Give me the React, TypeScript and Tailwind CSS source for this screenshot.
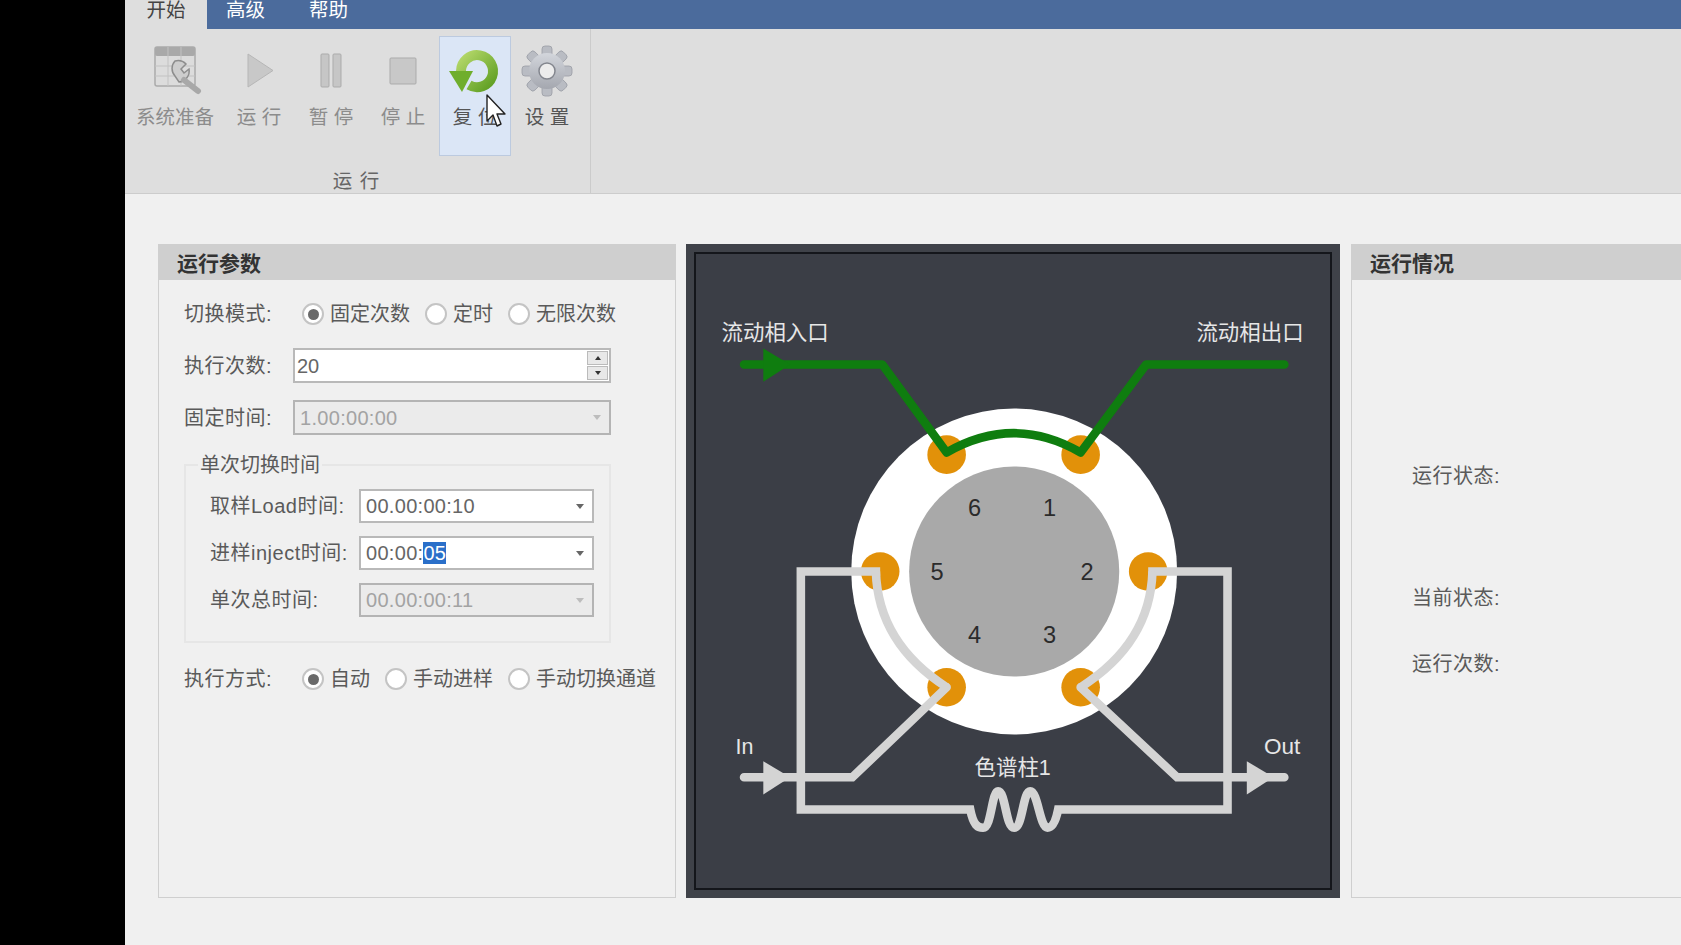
const RIBBON_ICON = "h-[58px] w-[58px]";

function PrepareIcon() {
  return (
    <svg viewBox="0 0 58 58" className={RIBBON_ICON}>
      <rect x="9" y="5" width="40" height="39" rx="2" fill="#dcdcdc" stroke="#ababab" strokeWidth="1.5" />
      <rect x="9" y="5" width="40" height="9" rx="2" fill="#a9a9a9" />
      <path d="M9 24H49M9 34H49M22 5V44M35 5V44" stroke="#c2c2c2" strokeWidth="1" />
      <path d="M29 19a11 11 0 0 1 11 3l-5 5 3 4 5-4a11 11 0 0 1-10 13L29 34a11 11 0 0 1 0-15Z" fill="#cdcdcd" stroke="#8d8d8d" strokeWidth="1.5" />
      <path d="M38 38L52 49" stroke="#a8a8a8" strokeWidth="6" strokeLinecap="round" />
    </svg>
  );
}

function PlayIcon() {
  return (
    <svg viewBox="0 0 58 58" className={RIBBON_ICON}>
      <path d="M18 12L43 28.500L18 45Z" fill="#c8c8c8" stroke="#b6b6b6" />
    </svg>
  );
}

function PauseIcon() {
  return (
    <svg viewBox="0 0 58 58" className={RIBBON_ICON}>
      <rect x="19" y="12" width="8" height="33" rx="1" fill="#c6c6c6" stroke="#ababab" />
      <rect x="31" y="12" width="8" height="33" rx="1" fill="#c6c6c6" stroke="#ababab" />
    </svg>
  );
}

function StopIcon() {
  return (
    <svg viewBox="0 0 58 58" className={RIBBON_ICON}>
      <rect x="16" y="16" width="26" height="26" rx="1" fill="#c8c8c8" stroke="#ababab" />
    </svg>
  );
}

function ResetIcon() {
  return (
    <svg viewBox="0 0 58 58" className={RIBBON_ICON}>
      <defs>
        <linearGradient id="resetGreen" x1="0" y1="0" x2="1" y2="1">
          <stop offset="0" stopColor="#b5d86a" />
          <stop offset="1" stopColor="#5e9e22" />
        </linearGradient>
      </defs>
      <path d="M15 29A16 16 0 1 1 23 43" fill="none" stroke="url(#resetGreen)" strokeWidth="10" />
      <path d="M3 29H27L16 50Z" fill="#6fae2c" />
    </svg>
  );
}

function GearIcon() {
  const teeth = [0, 45, 90, 135, 180, 225, 270, 315];
  return (
    <svg viewBox="0 0 58 58" className={RIBBON_ICON}>
      <defs>
        <linearGradient id="gearGray" x1="0" y1="0" x2="0" y2="1">
          <stop offset="0" stopColor="#d3d6dc" />
          <stop offset="1" stopColor="#a4a7af" />
        </linearGradient>
      </defs>
      {teeth.map((deg) => (
        <rect key={deg} x="24" y="4" width="10" height="12" rx="3" fill="#b9bcc3" stroke="#9a9da5" strokeWidth="0.8" transform={`rotate(${deg} 29 29)`} />
      ))}
      <circle cx="29" cy="29" r="18" fill="url(#gearGray)" />
      <circle cx="29" cy="29" r="8" fill="#ececec" stroke="#83868e" strokeWidth="1.5" />
    </svg>
  );
}

function RibbonButton({ label, wide, disabled, active, children }: { label: string; wide?: boolean; disabled?: boolean; active?: boolean; children: React.ReactNode }) {
  return (
    <div
      className={`flex h-[120px] shrink-0 flex-col items-center border pt-[5px] ${wide ? "w-[96px]" : "w-[72px]"} ${
        active ? "border-[#bccadf] bg-[#dbe6f6]" : "border-transparent"
      }`}
    >
      {children}
      <span className={`mt-[5px] whitespace-nowrap text-[19.5px] leading-[24px] ${disabled ? "text-[#8c8c8c]" : "text-[#555555]"}`}>{label}</span>
    </div>
  );
}

function FieldLabel({ text, className }: { text: string; className: string }) {
  return <span className={`whitespace-nowrap tracking-[0.5px] ${className}`}>{text}</span>;
}

function Radio({ label, checked }: { label: string; checked?: boolean }) {
  return (
    <div className="flex items-center gap-[6px]">
      <span className="flex h-[22px] w-[22px] items-center justify-center rounded-full border-2 border-[#c4c4c4] bg-white">
        {checked && <span className="h-[11px] w-[11px] rounded-full bg-[#6a6a6a]" />}
      </span>
      <span className="whitespace-nowrap">{label}</span>
    </div>
  );
}

function Caret({ disabled }: { disabled?: boolean }) {
  return <span className={`h-0 w-0 border-x-[4px] border-t-[5px] border-x-transparent ${disabled ? "border-t-[#bdbdbd]" : "border-t-[#666666]"}`} />;
}

function ComboBox({ value, disabled, className, children }: { value?: string; disabled?: boolean; className: string; children?: React.ReactNode }) {
  return (
    <div
      className={`flex items-center justify-between border-2 pr-[8px] text-[20px] tracking-[0.3px] ${className} ${
        disabled ? "border-[#b4b4b4] bg-[#ebebeb] text-[#a3a3a3]" : "border-[#b9b9b9] bg-white text-[#666666]"
      }`}
    >
      <span>{children ?? value}</span>
      <Caret disabled={disabled} />
    </div>
  );
}

function PanelHeader({ title }: { title: string }) {
  return <div className="flex h-[36px] shrink-0 items-center bg-[#cfcfcf] pl-[18px] pt-[3px] text-[21px] font-bold text-[#333333]">{title}</div>;
}

function ValveDiagram() {
  const ports = [
    [883, 424],
    [1008, 424],
    [821, 533],
    [1071, 533],
    [883, 641],
    [1008, 641],
  ];
  const numbers = [
    ["6", 909, 473],
    ["1", 979, 473],
    ["5", 874, 533],
    ["2", 1014, 533],
    ["4", 909, 592],
    ["3", 979, 592],
  ] as const;
  return (
    <svg viewBox="649.2 236.9 591.4 591.3" className="block h-full w-full">
      <circle cx="946" cy="533" r="152" fill="#ffffff" />
      <circle cx="946" cy="533" r="98" fill="#a9a9a9" />
      {ports.map(([cx, cy]) => (
        <circle key={`${cx}-${cy}`} cx={cx} cy={cy} r="18" fill="#e29109" />
      ))}
      <g fill="none" stroke="#d4d4d4" strokeWidth="8">
        <path d="M821 533H747V755H905C908 770 912 772 917 772C925 772 925 738 931 738C938 738 938 772 946 772C954 772 954 738 961 738C968 738 970 772 977 772C982 772 985 765 987 755H1145V533H1071" />
        <path d="M817 533Q819 600 883 641" />
        <path d="M1075 533Q1073 600 1008 641" />
        <path d="M694 725H795L883 641" strokeLinecap="round" />
        <path d="M1008 641L1098 725H1198" strokeLinecap="round" />
      </g>
      <path d="M712 710L737 725L712 741Z" fill="#d4d4d4" />
      <path d="M1163 710L1188 725L1163 741Z" fill="#d4d4d4" />
      <g fill="none" stroke="#0f7d0f" strokeWidth="8">
        <path d="M694 340H823L883 422Q946 386 1008 422L1069 340H1198" strokeLinecap="round" strokeLinejoin="round" />
      </g>
      <path d="M712 325L737 340L712 356Z" fill="#0f7d0f" />
      <g fill="#e6e6e6" fontSize="20">
        <text x="673" y="317">流动相入口</text>
        <text x="1116" y="317">流动相出口</text>
        <text x="686" y="703">In</text>
        <text x="1179" y="703" fontSize="21">Out</text>
        <text x="909" y="723">色谱柱1</text>
      </g>
      <g fill="#2b2b2b" fontSize="22" textAnchor="middle">
        {numbers.map(([n, x, y]) => (
          <text key={n} x={x} y={y + 8}>
            {n}
          </text>
        ))}
      </g>
    </svg>
  );
}

export default function App() {
  return (
    <div className="flex h-[945px] w-[1681px] overflow-hidden bg-black font-['Liberation_Sans','Noto_Sans_CJK_SC',sans-serif]">
      <div className="w-[125px] shrink-0 bg-black" />
      <div className="relative flex min-w-0 flex-1 flex-col bg-[#f0f0f0]">
        {/* menu tabs */}
        <div className="flex h-[29px] shrink-0 items-start bg-[#4b6b9c] text-[19.5px] leading-[20px] text-white">
          <div className="flex h-full w-[82px] justify-center bg-[#dedede] text-[#444444]">开始</div>
          <span className="ml-[19px]">高级</span>
          <span className="ml-[44px]">帮助</span>
        </div>

        {/* ribbon */}
        <div className="flex h-[165px] shrink-0 border-b border-[#cccccc] bg-[#dedede]">
          <div className="flex w-[466px] flex-col border-r border-[#cbcbcb] pl-[2px] pt-[7px]">
            <div className="flex">
              <RibbonButton label="系统准备" wide disabled>
                <PrepareIcon />
              </RibbonButton>
              <RibbonButton label="运 行" disabled>
                <PlayIcon />
              </RibbonButton>
              <RibbonButton label="暂 停" disabled>
                <PauseIcon />
              </RibbonButton>
              <RibbonButton label="停 止" disabled>
                <StopIcon />
              </RibbonButton>
              <RibbonButton label="复 位" active>
                <ResetIcon />
              </RibbonButton>
              <RibbonButton label="设 置">
                <GearIcon />
              </RibbonButton>
            </div>
            <div className="mt-[13px] pr-[4px] text-center text-[19.5px] leading-[24px] tracking-[1px] text-[#666666]">运 行</div>
          </div>
        </div>

        {/* content */}
        <div className="flex flex-1 gap-[10px] pl-[33px] pt-[50px]">
          <section className="flex h-[654px] w-[518px] shrink-0 flex-col border border-t-0 border-[#cfcfcf] text-[20px] text-[#5a5a5a]">
            <PanelHeader title="运行参数" />
            <div className="flex flex-col pl-[25px] pt-[17px]">
              <div className="flex h-[34px] items-center">
                <FieldLabel text="切换模式:" className="w-[118px]" />
                <div className="flex gap-[15px]">
                  <Radio label="固定次数" checked />
                  <Radio label="定时" />
                  <Radio label="无限次数" />
                </div>
              </div>
              <div className="mt-[17px] flex h-[35px] items-center">
                <FieldLabel text="执行次数:" className="w-[109px]" />
                <div className="flex h-full w-[318px] items-center justify-between border-2 border-[#b9b9b9] bg-white pl-[2px] pr-[1px] text-[20px] text-[#666666]">
                  <span>20</span>
                  <div className="flex flex-col gap-[1px]">
                    <span className="flex h-[14px] w-[21px] items-center justify-center border border-[#bbbbbb] bg-[#e8e8e8]">
                      <span className="h-0 w-0 border-x-[3px] border-b-[4px] border-x-transparent border-b-[#333333]" />
                    </span>
                    <span className="flex h-[14px] w-[21px] items-center justify-center border border-[#bbbbbb] bg-[#e8e8e8]">
                      <span className="h-0 w-0 border-x-[3px] border-t-[4px] border-x-transparent border-t-[#333333]" />
                    </span>
                  </div>
                </div>
              </div>
              <div className="mt-[17px] flex h-[35px] items-center">
                <FieldLabel text="固定时间:" className="w-[109px]" />
                <ComboBox value="1.00:00:00" disabled className="h-full w-[318px] pl-[5px]" />
              </div>

              <fieldset className="mt-[18px] h-[190px] w-[427px] border-2 border-[#e6e6e6]">
                <legend className="ml-[12px] px-[2px] text-[20px] leading-[24px]">单次切换时间</legend>
                <div className="flex flex-col gap-[13px] pl-[24px] pt-[12px]">
                  <div className="flex h-[34px] items-center">
                    <FieldLabel text="取样Load时间:" className="w-[149px]" />
                    <ComboBox value="00.00:00:10" className="h-full w-[235px] pl-[5px]" />
                  </div>
                  <div className="flex h-[34px] items-center">
                    <FieldLabel text="进样inject时间:" className="w-[149px]" />
                    <ComboBox className="h-full w-[235px] pl-[5px]">
                      00:00:<span className="bg-[#2a6fc9] text-white">05</span>
                    </ComboBox>
                  </div>
                  <div className="flex h-[34px] items-center">
                    <FieldLabel text="单次总时间:" className="w-[149px]" />
                    <ComboBox value="00.00:00:11" disabled className="h-full w-[235px] pl-[5px]" />
                  </div>
                </div>
              </fieldset>

              <div className="mt-[19px] flex h-[34px] items-center">
                <FieldLabel text="执行方式:" className="w-[118px]" />
                <div className="flex gap-[15px]">
                  <Radio label="自动" checked />
                  <Radio label="手动进样" />
                  <Radio label="手动切换通道" />
                </div>
              </div>
            </div>
          </section>

          <section className="h-[654px] w-[654px] shrink-0 bg-[#3f4249] p-[8px]">
            <div className="h-full w-full border-2 border-[#14161b] bg-[#3b3e46]">
              <ValveDiagram />
            </div>
          </section>

          <section className="ml-[1px] flex h-[654px] w-[345px] shrink-0 flex-col border border-t-0 border-[#cfcfcf] text-[20px] text-[#5a5a5a]">
            <PanelHeader title="运行情况" />
            <div className="flex flex-col pl-[60px] pt-[181px] leading-[30px]">
              <FieldLabel text="运行状态:" className="" />
              <FieldLabel text="当前状态:" className="mt-[92px]" />
              <FieldLabel text="运行次数:" className="mt-[36px]" />
            </div>
          </section>
        </div>

        {/* mouse pointer over the reset button */}
        <svg viewBox="0 0 20 34" className="absolute left-[361px] top-[94px] h-[34px] w-[20px]">
          <path d="M1 1V27L7 21L11 32L15 30L11 20H19Z" fill="#ffffff" stroke="#222222" strokeWidth="1.4" strokeLinejoin="round" />
        </svg>
      </div>
    </div>
  );
}
